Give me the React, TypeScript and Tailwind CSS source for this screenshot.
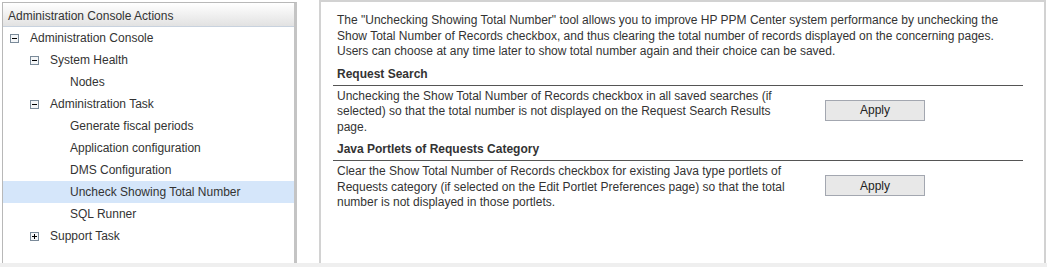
type Node = { label: string; level: number; icon?: "minus" | "plus"; selected?: boolean };

const tree: Node[] = [
  { label: "Administration Console", level: 0, icon: "minus" },
  { label: "System Health", level: 1, icon: "minus" },
  { label: "Nodes", level: 2 },
  { label: "Administration Task", level: 1, icon: "minus" },
  { label: "Generate fiscal periods", level: 2 },
  { label: "Application configuration", level: 2 },
  { label: "DMS Configuration", level: 2 },
  { label: "Uncheck Showing Total Number", level: 2, selected: true },
  { label: "SQL Runner", level: 2 },
  { label: "Support Task", level: 1, icon: "plus" },
];

function ToggleIcon({ kind }: { kind: "minus" | "plus" }) {
  return (
    <svg width="9" height="9" viewBox="0 0 9 9" className="shrink-0">
      <rect x="0.5" y="0.5" width="8" height="8" fill="#f4f6f8" stroke="#7a8a99" />
      <line x1="2" y1="4.5" x2="7" y2="4.5" stroke="#000" />
      {kind === "plus" && <line x1="4.5" y1="2" x2="4.5" y2="7" stroke="#000" />}
    </svg>
  );
}

function TreeRow({ node }: { node: Node }) {
  const pad = node.level === 0 ? "pl-[7px]" : node.level === 1 ? "pl-[27px]" : "pl-[67px]";
  return (
    <div className={`flex h-[22px] items-center ${pad} ${node.selected ? "bg-[#d5e6fa]" : ""}`}>
      {node.icon && <ToggleIcon kind={node.icon} />}
      <span className={node.icon ? "ml-[11px]" : ""}>{node.label}</span>
    </div>
  );
}

function Section({ title, text, top }: { title: string; text: string; top: string }) {
  return (
    <div>
      <div className={`border-b border-[#555] ${top} pb-[3px] pl-[4px]`}>
        <div className="h-[16px] font-bold leading-[16px]">{title}</div>
      </div>
      <div className="flex items-center pt-[3px] pl-[4px]">
        <p className="w-[455px] leading-[15.5px]">{text}</p>
        <button className="ml-[33px] mt-[-3px] h-[21px] w-[100px] border border-[#a3a7b0] bg-[#e8e8e8] text-[12px] text-[#222]">
          Apply
        </button>
      </div>
    </div>
  );
}

export default function App() {
  return (
    <div
      className="flex h-[267px] w-[1047px] flex-col bg-white text-[12px] text-[#333]"
      style={{ fontFamily: '"Liberation Sans", Arial, sans-serif' }}
    >
      <div className="flex h-[263px]">
        <aside className="ml-[2px] mt-[2px] flex w-[295px] flex-col border-l border-t border-[#b8b8b8] border-r-[3px] border-r-[#c4c4c4]">
          <div className="flex h-[24px] items-center border-b border-[#c8d2de] bg-gradient-to-b from-white to-[#e2e2e2] pt-[2px] pl-[5px]">
            Administration Console Actions
          </div>
          <div>
            {tree.map((n) => (
              <TreeRow key={n.label} node={n} />
            ))}
          </div>
        </aside>
        <main className="ml-[22px] mr-[1px] flex-1 border-l-[2px] border-t-[2px] border-r-[2px] border-[#d2d2d2] pl-[12px] pr-[21px] pt-[11px]">
          <p className="pl-[4px] leading-[15.5px]">
            The "Unchecking Showing Total Number" tool allows you to improve HP PPM Center system performance by
            unchecking the Show Total Number of Records checkbox, and thus clearing the total number of records
            displayed on the concerning pages. Users can choose at any time later to show total number again and their
            choice can be saved.
          </p>
          <div>
            <Section
              top="pt-[6px]"
              title="Request Search"
              text="Unchecking the Show Total Number of Records checkbox in all saved searches (if selected) so that the total number is not displayed on the Request Search Results page."
            />
            <Section
              top="pt-[6px]"
              title="Java Portlets of Requests Category"
              text="Clear the Show Total Number of Records checkbox for existing Java type portlets of Requests category (if selected on the Edit Portlet Preferences page) so that the total number is not displayed in those portlets."
            />
          </div>
        </main>
      </div>
      <div className="h-[4px] bg-[#efefef]" />
    </div>
  );
}
